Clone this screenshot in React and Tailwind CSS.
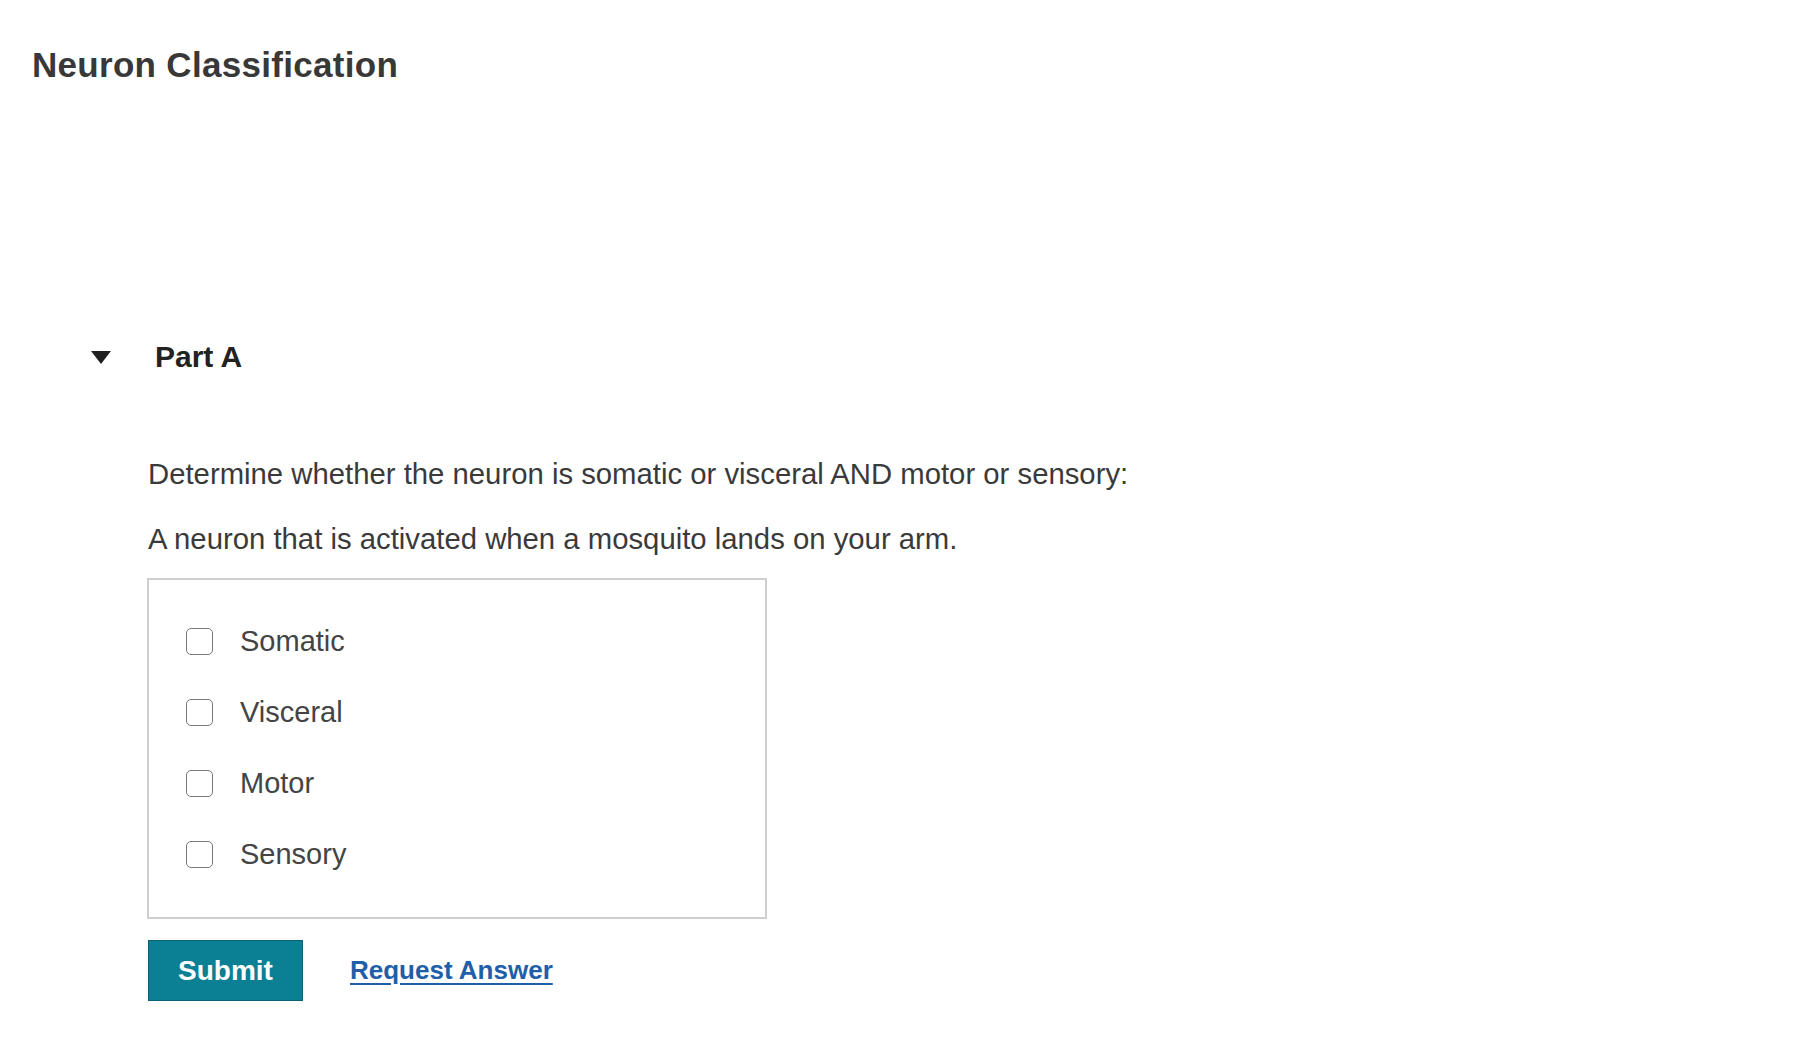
import { useState } from "react";

const options = ["Somatic", "Visceral", "Motor", "Sensory"];

export default function App() {
  const [checked, setChecked] = useState({});
  const [open, setOpen] = useState(true);

  return (
    <div className="min-h-screen bg-white font-['Liberation_Sans',Arial,sans-serif] text-[#333]">
      {/* Title */}
      <h1 className="pl-[32px] pt-[45px] text-[35px] leading-[40px] font-bold tracking-[0.3px] text-[#383838]">
        Neuron Classification
      </h1>

      {/* Part header */}
      <button
        className="mt-[254px] ml-[91px] flex items-center gap-[44px]"
        onClick={() => setOpen(!open)}
      >
        <svg width="20" height="13" viewBox="0 0 20 13" className={open ? "" : "-rotate-90"}>
          <path d="M0 0H20L10 13Z" fill="#1f1f1f" />
        </svg>
        <span className="text-[30px] leading-[36px] font-bold text-[#222]">Part A</span>
      </button>

      {open && (
        <div className="pl-[148px]">
          <p className="mt-[82px] text-[29.3px] leading-[34px] text-[#3a3a3a]">
            Determine whether the neuron is somatic or visceral AND motor or sensory:
          </p>
          <p className="mt-[31px] text-[29.3px] leading-[34px] text-[#3a3a3a]">
            A neuron that is activated when a mosquito lands on your arm.
          </p>

          {/* Options box */}
          <div className="mt-[22px] -ml-px w-[620px] h-[341px] border-2 border-[#cfcfcf] pl-[37px] pt-[36px] flex flex-col gap-[21px]">
            {options.map((o) => (
              <label key={o} className="h-[50px] flex items-center gap-[27px] cursor-pointer">
                <span
                  className={`w-[27px] h-[27px] rounded-[5px] border-[1.5px] border-[#7a7a7a] flex items-center justify-center ${
                    checked[o] ? "bg-[#0b7f93] border-[#0b7f93]" : "bg-white"
                  }`}
                  onClick={() => setChecked({ ...checked, [o]: !checked[o] })}
                >
                  {checked[o] && (
                    <svg width="16" height="16" viewBox="0 0 16 16">
                      <path d="M3 8l3 3 7-7" stroke="white" strokeWidth="2" fill="none" />
                    </svg>
                  )}
                </span>
                <span className="text-[29px] leading-[34px] text-[#444]">{o}</span>
              </label>
            ))}
          </div>

          {/* Actions */}
          <div className="mt-[21px] flex items-center gap-[47px]">
            <button className="w-[155px] h-[61px] bg-[#0b7f93] border border-[#0a6276] text-white text-[28px] font-bold">
              Submit
            </button>
            <a href="#" className="text-[26px] font-bold text-[#1f5ea8] underline underline-offset-[4px]">
              Request Answer
            </a>
          </div>
        </div>
      )}
    </div>
  );
}
